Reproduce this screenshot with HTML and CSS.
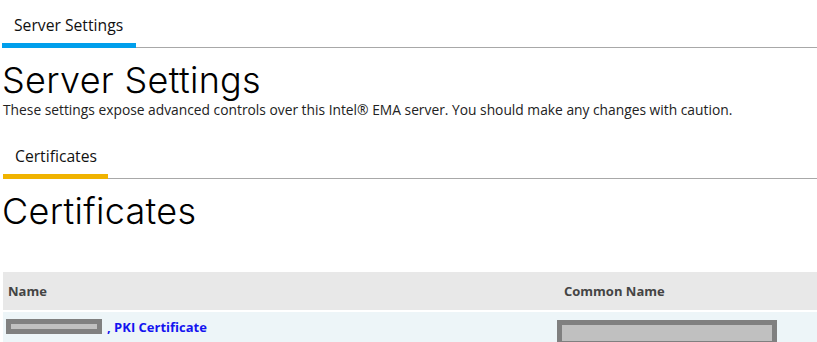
FILE: index.html
```html
<!DOCTYPE html>
<html>
<head>
<meta charset="utf-8">
<link rel="stylesheet" href="styles.css">
</head>
<body>
<div class="page">
  <nav class="tabbar top">
    <div class="tab tab-blue">Server Settings</div>
  </nav>
  <h1 class="title">Server Settings</h1>
  <p class="desc">These settings expose advanced controls over this Intel® EMA server. You should make any changes with caution.</p>
  <nav class="tabbar sub">
    <div class="tab tab-yellow">Certificates</div>
  </nav>
  <h2 class="title title2">Certificates</h2>
  <div class="table">
    <div class="thead">
      <div class="th th-name">Name</div>
      <div class="th th-cn">Common Name</div>
    </div>
    <div class="trow">
      <div class="td td-name"><span class="redact redact-name"></span><a class="link">, PKI Certificate</a></div>
      <div class="td td-cn"><span class="redact redact-cn"></span></div>
    </div>
  </div>
</div>
</body>
</html>
```
FILE: styles.css
```css
html, body {
  margin: 0;
  padding: 0;
  background: #fff;
  overflow: hidden;
}
body {
  font-family: "Open Sans", "Noto Sans", sans-serif;
  color: #222;
}
.page {
  display: flex;
  flex-direction: column;
}
.tabbar {
  display: flex;
  align-items: flex-start;
  border-bottom: 1px solid #a8a8a8;
}
.tabbar.top {
  margin-left: 2px;
}
.tabbar.sub {
  margin-left: 3px;
  margin-top: 5px;
}
.tab {
  font-size: 15.7px;
  line-height: 20px;
  color: #111;
  padding: 15px 12px 8px;
  margin-bottom: -1px;
  white-space: nowrap;
}
.tab-blue {
  width: 110px;
  border-bottom: 5px solid #009fec;
}
.tab-yellow {
  width: 81px;
  padding-top: 22px;
  border-bottom: 5px solid #f0b300;
}
.title {
  font-family: Inter, "Noto Sans", sans-serif;
  font-weight: 300;
  font-size: 36px;
  letter-spacing: 0.3px;
  line-height: 40px;
  margin: 12px 0 0 2px;
  color: #000;
}
.desc {
  margin: 1px 0 0 3px;
  font-size: 13.8px;
  line-height: 18px;
  color: #222;
}
.table {
  margin: 41px 0 0 3px;
  display: flex;
  flex-direction: column;
}
.thead, .trow {
  display: grid;
  grid-template-columns: 551px 1fr;
}
.thead {
  background: #e8e8e8;
  height: 38px;
  align-items: center;
  border-bottom: 2px solid #fff;
}
.th {
  font-weight: 700;
  font-size: 13px;
  color: #444;
}
.th-name { padding-left: 5px; }
.th-cn { padding-left: 10px; }
.trow {
  background: #edf5f8;
  height: 40px;
}
.td {
  padding-top: 7px;
}
.td-name {
  padding-left: 3px;
  display: flex;
  align-items: flex-start;
}
.td-cn {
  padding-left: 3px;
  padding-top: 8px;
}
.redact {
  display: block;
  box-sizing: border-box;
  background: #c0c0c0;
  border: 5px solid #808080;
}
.redact-name {
  width: 96px;
  height: 15px;
}
.redact-cn {
  width: 220px;
  height: 26px;
}
.link {
  color: #1414f0;
  font-weight: 700;
  font-size: 13px;
  line-height: 18px;
  margin-left: 5px;
  margin-top: -1px;
}
```
